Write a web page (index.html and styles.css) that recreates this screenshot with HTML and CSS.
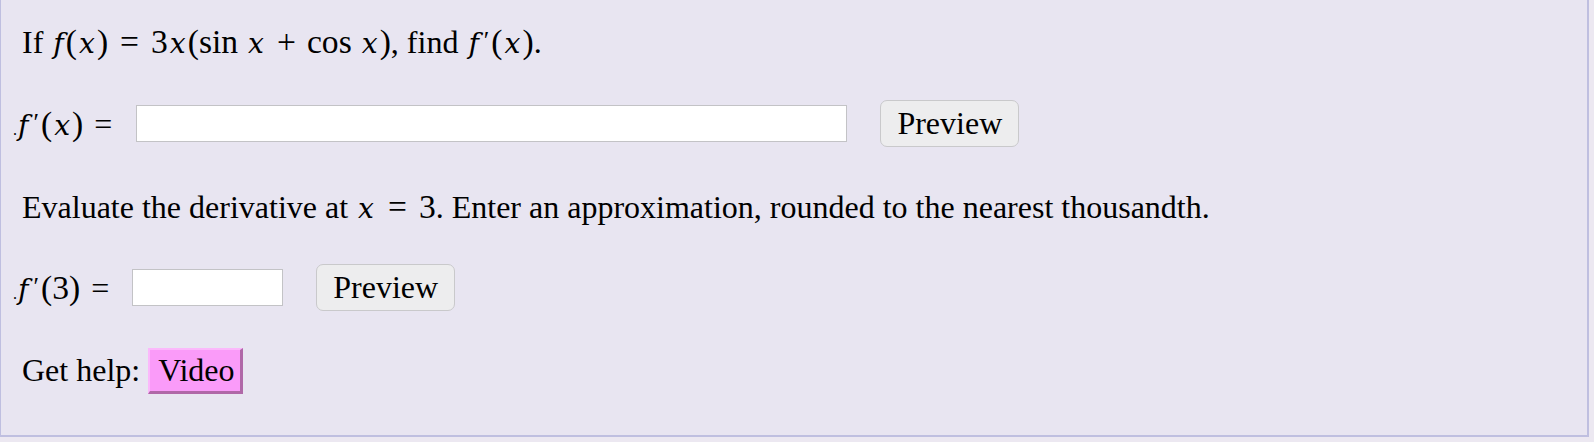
FILE: index.html
```html
<!DOCTYPE html>
<html>
<head>
<meta charset="utf-8">
<link rel="stylesheet" href="styles.css">
</head>
<body>
<div class="problem">
  <p class="line first">If <span class="math"><i>f</i>(<i>x</i>)<span class="rel">=</span>3<i>x</i>(sin<span class="thin"></span><i>x</i><span class="bin">+</span>cos<span class="thin"></span><i>x</i>)</span>, find <span class="math"><i>f</i><span class="prime">′</span>(<i>x</i>)</span>.</p>

  <div class="row r1">
    <span class="label"><span class="dot">.</span><span class="math"><i>f</i><span class="prime">′</span>(<i>x</i>)</span><span class="eq">=</span></span>
    <span class="input wide"></span>
    <span class="btn">Preview</span>
  </div>

  <p class="line l3">Evaluate the derivative at <span class="math"><i>x</i><span class="rel">=</span>3</span>. Enter an approximation, rounded to the nearest thousandth.</p>

  <div class="row r2">
    <span class="label"><span class="dot">.</span><span class="math"><i>f</i><span class="prime">′</span>(3)</span><span class="eq">=</span></span>
    <span class="input narrow"></span>
    <span class="btn">Preview</span>
  </div>

  <p class="line help">Get help: <span class="video">Video</span></p>
</div>
</body>
</html>
```

FILE: styles.css
```css
html, body {
  margin: 0;
  padding: 0;
  background: #ece8f1;
}

.problem {
  width: 1586px;
  background: #e8e5f1;
  border-left: 1px solid #bfbfe0;
  border-right: 2px solid #bfbfe0;
  border-bottom: 2px solid #bfbfe0;
  padding: 24px 0 51px 0;
  font-family: "Liberation Serif", "Times New Roman", serif;
  font-size: 32px;
  color: #000;
  box-sizing: content-box;
}

.line {
  margin: 0;
  padding-left: 21px;
  line-height: 36px;
  height: 36px;
  white-space: nowrap;
}

.math {
  font-size: 1.05em;
}

.math i {
  font-family: "DejaVu Serif", serif;
  font-style: italic;
  font-size: 0.84em;
  margin: 0 2px;
}

.rel {
  display: inline-block;
  margin: 0 12px;
}

.bin {
  display: inline-block;
  margin: 0 11px;
}

.thin {
  display: inline-block;
  width: 8px;
}

.prime {
  display: inline-block;
  font-size: 0.75em;
  position: relative;
  top: -4px;
  margin: 0 2px 0 3px;
}

.row {
  display: flex;
  align-items: center;
  height: 47px;
  padding-left: 12px;
}

.r1 {
  margin-top: 40px;
}

.l3 {
  margin-top: 42px;
}

.r2 {
  margin-top: 39px;
}

.help {
  margin-top: 37px;
}

.label {
  display: inline-flex;
  align-items: baseline;
  white-space: nowrap;
}

.dot {
  font-size: 16px;
  margin-right: -1px;
}

.eq {
  margin-left: 11px;
}

.input {
  display: inline-block;
  height: 37px;
  box-sizing: border-box;
  background: #fff;
  border: 1.5px solid #c3c3c6;
}

.wide {
  width: 711px;
  margin-left: 24px;
}

.narrow {
  width: 151px;
  margin-left: 23px;
}

.btn {
  display: inline-flex;
  align-items: center;
  justify-content: center;
  box-sizing: border-box;
  width: 139px;
  height: 47px;
  margin-left: 33px;
  background: #ededee;
  border: 1.5px solid #c9c9cb;
  border-radius: 7px;
  font-size: 32px;
}

.video {
  display: inline-block;
  background: #fa9bf9;
  border-style: solid;
  border-width: 2px 3px 3px 2px;
  border-color: #fbb8fb #b068a8 #b068a8 #fbb8fb;
  padding: 0 6px 0 8px;
  line-height: 41px;
  margin-left: 0;
}
```
